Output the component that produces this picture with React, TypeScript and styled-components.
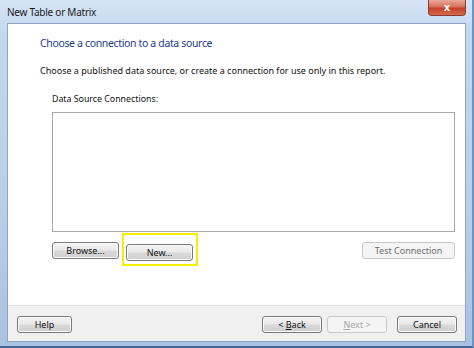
import styled, { createGlobalStyle } from 'styled-components';

const GlobalStyle = createGlobalStyle`
  html, body { margin: 0; padding: 0; }
  body {
    width: 474px;
    height: 348px;
    overflow: hidden;
    font-family: "Noto Sans", "Liberation Sans", sans-serif;
  }
`;

const Frame = styled.div`
  width: 474px;
  height: 348px;
  box-sizing: border-box;
  display: flex;
  flex-direction: column;
  padding: 0 6px 4px 7px;
  background: linear-gradient(180deg, #d6e5f5 0%, #c3d8ee 10%, #b9cfe8 60%, #a9c2e0 100%);
  border-right: 2px solid #6d93c4;
  border-bottom: 2px solid #44699c;
  position: relative;
`;

const TitleBar = styled.div`
  height: 23px;
  display: flex;
  align-items: center;
  font-size: 10px;
  color: #1a1a1a;
  letter-spacing: -0.25px;
`;

const CloseButton = styled.div`
  position: absolute;
  top: 0;
  right: 6px;
  width: 38px;
  height: 16px;
  border: 1px solid #8a3b30;
  border-top: none;
  border-radius: 0 0 4px 4px;
  background: linear-gradient(180deg, #e9a99a 0%, #d8705c 45%, #c2412a 55%, #d66a4c 100%);
  display: flex;
  align-items: center;
  justify-content: center;
  color: #fff;
  font-family: "DejaVu Sans", sans-serif;
  font-weight: bold;
  font-size: 10px;
  box-sizing: border-box;
`;

const Client = styled.div`
  flex: 1;
  display: flex;
  flex-direction: column;
  background: #fff;
  border: 1px solid #8fa6c2;
`;

const Body = styled.div`
  flex: 1;
  padding: 11px 10px 0 32px;
  display: flex;
  flex-direction: column;
`;

const Heading = styled.div`
  font-size: 10.5px;
  color: #1e3a8c;
  letter-spacing: -0.35px;
  line-height: 16px;
`;

const Description = styled.div`
  margin-top: 13px;
  font-size: 9px;
  color: #111;
  line-height: 14px;
`;

const Section = styled.div`
  margin-top: 14px;
  padding-left: 12px;
  display: flex;
  flex-direction: column;
`;

const Label = styled.div`
  font-size: 8.8px;
  color: #111;
  line-height: 14px;
`;

const ListBox = styled.div`
  margin-top: 6px;
  height: 120px;
  border: 1px solid #a7a7a7;
  background: #fff;
  width: 403px;
  box-sizing: border-box;
`;

const ButtonRow = styled.div`
  margin-top: 7px;
  display: flex;
  align-items: center;
  gap: 7px;
  width: 403px;
`;

const Highlight = styled.div`
  padding: 4px 3px 3px 2px;
  border: 2px solid #f6f000;
  margin: -6px 0 -5px -4px;
`;

const Button = styled.button<{ $w: number; $disabled?: boolean }>`
  width: ${({ $w }) => $w}px;
  height: 17px;
  padding: 0;
  box-sizing: border-box;
  border: 1px solid ${({ $disabled }) => ($disabled ? '#c9c9c9' : '#7a7a7a')};
  border-radius: 3px;
  background: ${({ $disabled }) =>
    $disabled
      ? '#f4f4f4'
      : 'linear-gradient(180deg, #f3f3f3 0%, #e9e9e9 48%, #d9d9d9 52%, #d0d0d0 100%)'};
  color: #111;
  font-family: "Noto Sans", "Liberation Sans", sans-serif;
  font-size: 9px;
  line-height: 15px;
  box-shadow: inset 0 0 0 1px ${({ $disabled }) => ($disabled ? 'transparent' : '#fbfbfb')};
`;

const MutedText = styled.span<{ $tone: string }>`
  color: ${({ $tone }) => $tone};
`;

const Spacer = styled.div`
  flex: 1;
`;

const Footer = styled.div`
  height: 36px;
  box-sizing: border-box;
  border-top: 1px solid #dfdfdf;
  background: #f0f0f0;
  display: flex;
  align-items: center;
  padding: 2px 8px 0 9px;
  gap: 5px;
`;

const CancelGap = styled.div`
  width: 0;
`;

export default function App() {
  return (
    <>
      <GlobalStyle />
      <Frame>
        <TitleBar>New Table or Matrix</TitleBar>
        <CloseButton>x</CloseButton>
        <Client>
          <Body>
            <Heading>Choose a connection to a data source</Heading>
            <Description>
              Choose a published data source, or create a connection for use only in this report.
            </Description>
            <Section>
              <Label>Data Source Connections:</Label>
              <ListBox />
              <ButtonRow>
                <Button $w={67}>Browse...</Button>
                <Highlight>
                  <Button $w={67}>New...</Button>
                </Highlight>
                <Spacer />
                <Button $w={93} $disabled>
                  <MutedText $tone="#6f6f6f">Test Connection</MutedText>
                </Button>
              </ButtonRow>
            </Section>
          </Body>
          <Footer>
            <Button $w={55}>Help</Button>
            <Spacer />
            <Button $w={60}>
              &lt; <u>B</u>ack
            </Button>
            <Button $w={60} $disabled>
              <MutedText $tone="#a8a8a8">
                <u>N</u>ext &gt;
              </MutedText>
            </Button>
            <CancelGap />
            <Button $w={60}>Cancel</Button>
          </Footer>
        </Client>
      </Frame>
    </>
  );
}
